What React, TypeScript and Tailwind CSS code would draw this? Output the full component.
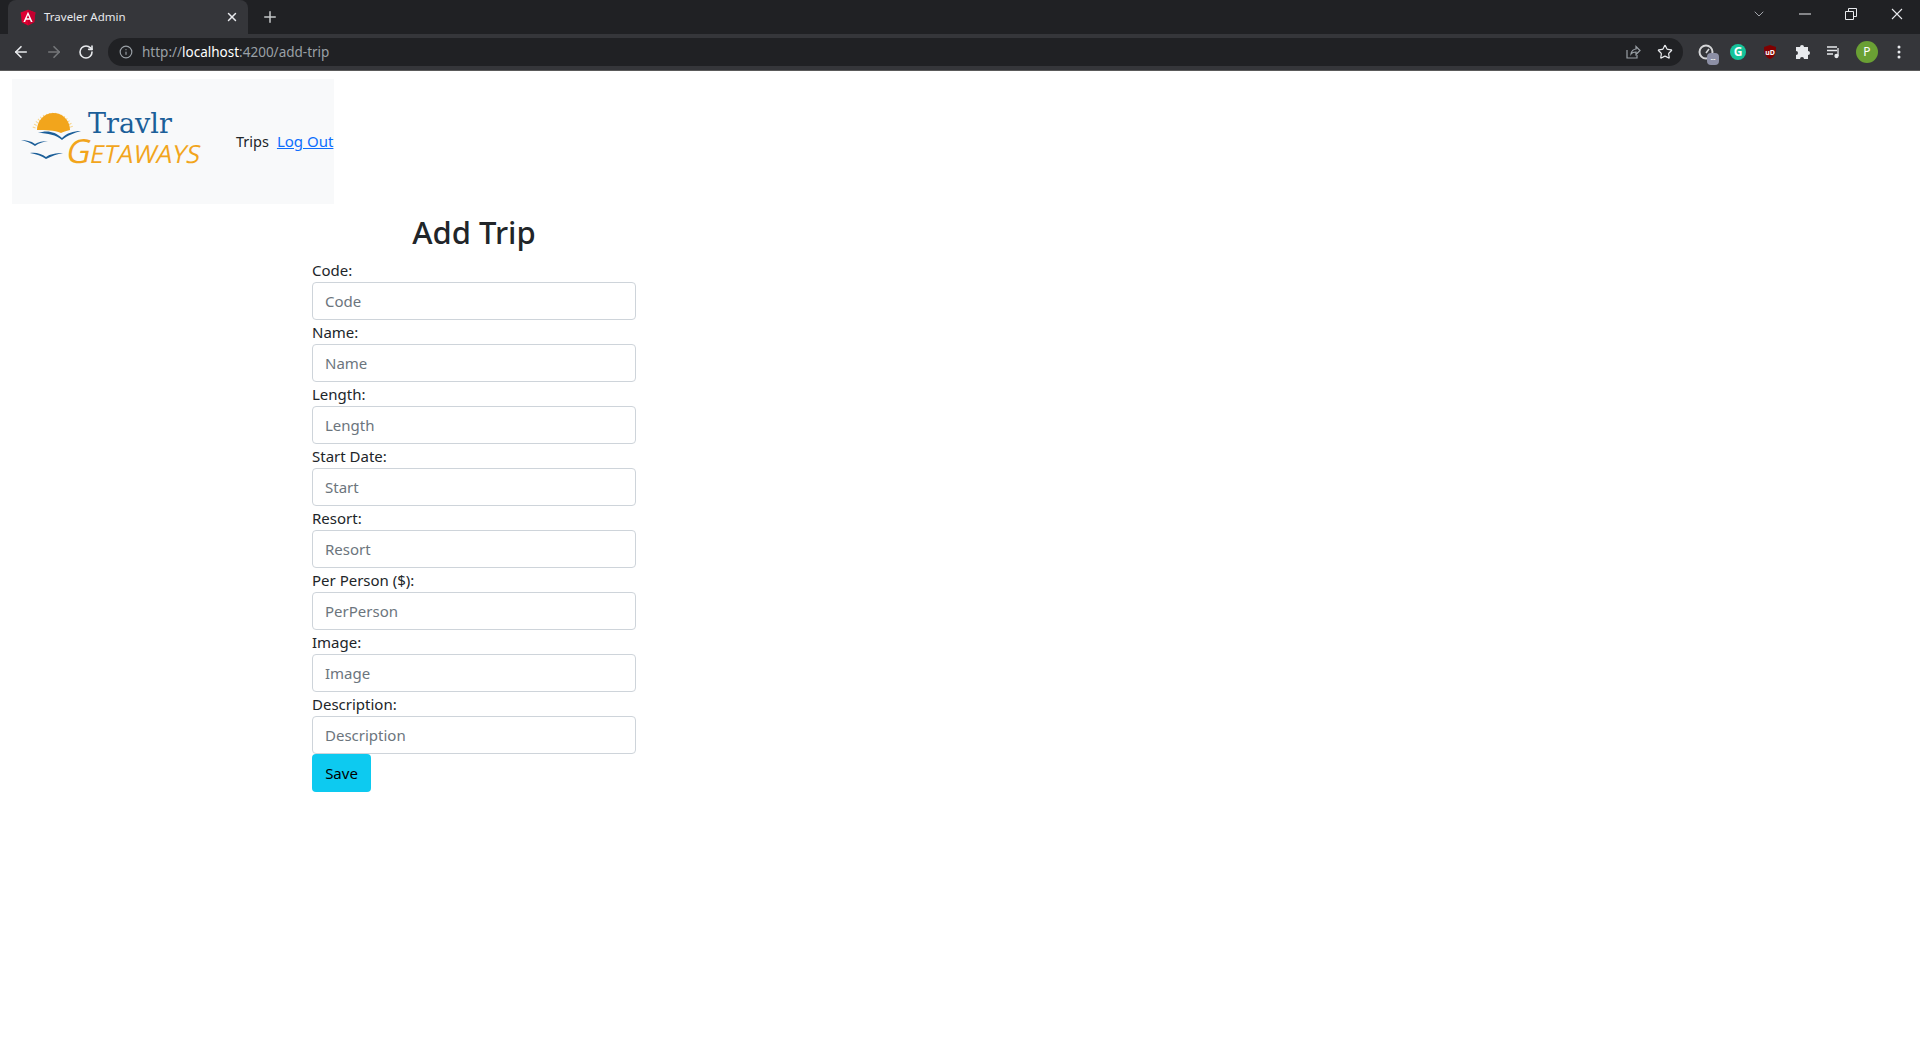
import { ArrowLeft, ArrowRight, ChevronDown, Info, Plus, RotateCw, Star, X } from 'lucide-react';

const fields = [
  { label: 'Code:', placeholder: 'Code' },
  { label: 'Name:', placeholder: 'Name' },
  { label: 'Length:', placeholder: 'Length' },
  { label: 'Start Date:', placeholder: 'Start' },
  { label: 'Resort:', placeholder: 'Resort' },
  { label: 'Per Person ($):', placeholder: 'PerPerson' },
  { label: 'Image:', placeholder: 'Image' },
  { label: 'Description:', placeholder: 'Description' },
];

const AngularIcon = () => (
  <svg width="16" height="17" viewBox="0 0 250 250" className="shrink-0">
    <path fill="#dd0031" d="M125 5 10 46l18 152 97 52 97-52 18-152z" />
    <path fill="#c3002f" d="M125 5v245l97-52 18-152z" />
    <path fill="#fff" d="M125 34 53 195h27l14-36h61l15 36h27zm21 103h-42l21-50z" />
  </svg>
);

const TabBar = () => (
  <div className="flex h-[34px] items-center bg-[#202124]">
    <div className="ml-2 flex h-[34px] w-[240px] items-center rounded-t-lg bg-[#35363a] pl-3 pr-[9px]">
      <AngularIcon />
      <span className="ml-2 flex-1 text-[11.5px] text-[#e8eaed]">Traveler Admin</span>
      <X size={14} strokeWidth={2.5} className="text-[#e8eaed]" />
    </div>
    <Plus size={18} strokeWidth={2} className="ml-[13px] text-[#c4c7c9]" />
    <div className="flex-1" />
    <div className="mt-[6px] flex h-[16px] items-center self-start text-[#e8eaed]">
      <ChevronDown size={16} strokeWidth={1.25} className="mr-[32px] text-[#bdc1c6]" />
      <svg width="12" height="12" viewBox="0 0 12 12" className="mr-[34px]"><path d="M0 6h12" stroke="currentColor" strokeWidth="1" /></svg>
      <svg width="12" height="12" viewBox="0 0 12 12" className="mr-[33px]" fill="none" stroke="currentColor"><path d="M.5 3.500h8v8h-8zM3.500 3.500v-3h8v8h-3" /></svg>
      <svg width="14" height="14" viewBox="0 0 14 14" className="mr-[16px]" stroke="currentColor" strokeWidth="1.1"><path d="m2 2 10 10M12 2 2 12" /></svg>
    </div>
  </div>
);

const ToolBar = () => (
  <div className="flex h-[37px] items-center border-b border-[#5a5a5a] bg-[#35363a]">
    <ArrowLeft size={18} strokeWidth={2.2} className="ml-[12px] text-[#e8eaed]" />
    <ArrowRight size={18} strokeWidth={2.2} className="ml-[15px] text-[#75777a]" />
    <RotateCw size={16} strokeWidth={2.4} className="ml-[15px] text-[#e8eaed]" />
    <div className="ml-[14px] flex h-[28px] w-[1575px] shrink-0 items-center rounded-full bg-[#202124] pl-[11px] pr-[10px]">
      <Info size={14} className="text-[#9aa0a6]" />
      <span className="ml-[9px] flex-1 text-[13.5px] text-[#9aa0a6]">
        http://<span className="text-white">localhost</span>:4200/add-trip
      </span>
      <svg width="16" height="16" viewBox="0 0 16 16" fill="none" stroke="#9aa0a6" strokeWidth="1.2" className="mr-[16px]">
        <path d="M2 6v8h10v-3M6 10c0-3 3-5 5-5V2.500l4 4-4 4V8c-2 0-4 .5-5 2z" />
      </svg>
      <Star size={16} strokeWidth={1.8} className="text-[#e8eaed]" />
    </div>
    <div className="relative ml-[15px] h-[16px] w-[16px]">
      <svg width="16" height="16" viewBox="0 0 16 16" fill="none"><circle cx="8" cy="8" r="6.500" stroke="#d5d6d8" strokeWidth="2" /><path d="m8 9 3-4" stroke="#d5d6d8" strokeWidth="1.500" /></svg>
      <span className="absolute left-[9px] top-[9px] flex h-[12px] w-[12px] items-center justify-center rounded-sm bg-[#8c8fa5] text-[8px] leading-none text-white">--</span>
    </div>
    <div className="ml-[16px] flex h-[16px] w-[16px] items-center justify-center rounded-full bg-[#15c39a] text-[12px] font-bold text-white">G</div>
    <div className="relative ml-[16px] h-[16px] w-[16px]">
      <svg width="16" height="16" viewBox="0 0 16 16"><path fill="#800000" d="M8 1 2 3c0 6 1 10 6 12 5-2 6-6 6-12z" /></svg>
      <span className="absolute inset-0 flex items-center justify-center text-[7px] font-bold leading-none text-white">uD</span>
    </div>
    <svg width="16" height="16" viewBox="0 0 16 16" className="ml-[16px]" fill="#e8eaed"><path d="M6 3a2 2 0 0 1 4 0h4v4a2 2 0 0 1 0 4v4h-4a2 2 0 0 0-4 0H2v-4a2 2 0 0 0 0-4V3z" /></svg>
    <svg width="16" height="16" viewBox="0 0 16 16" className="ml-[16px]" fill="none" stroke="#e8eaed" strokeWidth="1.300"><path d="M1 3h10M1 6.500h10M1 10h6" /><path d="M12 4v8" /><circle cx="10.500" cy="12" r="1.500" fill="#e8eaed" /></svg>
    <div className="ml-[14px] flex h-[22px] w-[22px] items-center justify-center rounded-full bg-[#6aa034] text-[12px] text-white">P</div>
    <svg width="4" height="14" viewBox="0 0 4 14" className="ml-[19px]" fill="#e8eaed"><circle cx="2" cy="2" r="1.500" /><circle cx="2" cy="7" r="1.500" /><circle cx="2" cy="12" r="1.500" /></svg>
  </div>
);

const Logo = () => (
  <div className="relative h-[65px] w-[184px] shrink-0">
    <svg width="62" height="54" viewBox="0 0 62 54" className="absolute left-[-2px] top-0">
      <path d="M13 19a20 20 0 0 1 38 0" fill="none" stroke="#f8d58a" strokeWidth="3" strokeDasharray="1 2" />
      <path fill="#f2a51c" d="M16 21a16.500 17 0 0 1 33 0c-4 1-7 2-9 3-7-3-15-3-24-3z" />
      <path fill="#1c5f99" d="M17 24c8-3 17-2 24 5 5-5 11-7 19-7-7 2-13 4-19 9-6-5-14-7-24-7zM0 31c5 0 10 1 14 4 3-2 8-3 13-3-5 1-9 2-13 5-4-3-9-5-14-6zM9 44c6-1 12 1 16 4 4-3 10-4 17-4-6 1-11 3-17 6-4-3-10-5-16-6z" />
    </svg>
    <span className="absolute left-[65px] top-0 font-['DejaVu_Serif',serif] text-[27px] leading-[30px] text-[#1c5f99]">Travlr</span>
    <span className="absolute left-[44px] top-[24px] -skew-x-12 font-['Open_Sans',sans-serif] text-[25px] font-medium leading-[36px] text-[#f2a51c]">
      <span className="text-[33px]">G</span>ETAWAYS
    </span>
  </div>
);

export default function App() {
  return (
    <div className="min-h-[1040px] bg-white font-['Noto_Sans',sans-serif] text-[16px] text-[#212529]">
      <TabBar />
      <ToolBar />
      <div className="pl-3 pt-2">
        <nav className="flex h-[125px] w-[322px] items-center bg-[#f8f9fa]">
          <div className="ml-[11px]"><Logo /></div>
          <span className="ml-[29px] text-[14.5px]">Trips</span>
          <a href="#" className="ml-2 text-[15px] text-[#0d6efd] underline">Log Out</a>
        </nav>
        <form className="ml-[300px] w-[324px]">
          <h2 className="mb-[7px] mt-[9px] text-center text-[31px] font-medium leading-[38px]">Add Trip</h2>
          {fields.map((field) => (
            <div key={field.label}>
              <label className="block h-[24px] text-[15px] leading-[24px]">{field.label}</label>
              <input
                placeholder={field.placeholder}
                className="block h-[38px] w-full rounded border border-[#ced4da] bg-white px-3 text-[15px] placeholder:text-[#6c757d]"
              />
            </div>
          ))}
          <button type="button" className="block h-[38px] w-[59px] rounded bg-[#0dcaf0] text-[15px] text-black">Save</button>
        </form>
      </div>
    </div>
  );
}
